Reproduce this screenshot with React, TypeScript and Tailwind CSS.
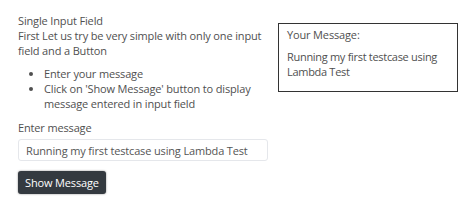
import * as React from "react";

export default function App() {
  const [value, setValue] = React.useState(
    "Running my first testcase using Lambda Test"
  );
  const [shown, setShown] = React.useState(
    "Running my first testcase using Lambda Test"
  );

  return (
    <div
      className="flex h-[206px] w-[474px] items-start bg-white pl-[18px] pt-[13px] text-[11px] leading-[15px] tracking-[-0.15px] text-[#505050]"
      style={{ fontFamily: '"Open Sans", Lato, sans-serif' }}
    >
      <div className="w-[260px] shrink-0 pr-[2px]">
        <p>Single Input Field</p>
        <p>First Let us try be very simple with only one input field and a Button</p>
        <ul className="mt-[8px] list-disc pl-[26px]">
          <li>Enter your message</li>
          <li>Click on &apos;Show Message&apos; button to display message entered in input field</li>
        </ul>
        <label className="mt-[9px] block" htmlFor="msg">
          Enter message
        </label>
        <input
          id="msg"
          value={value}
          onChange={(e) => setValue(e.target.value)}
          className="mt-[4px] block h-[22px] w-[250px] rounded-[3px] border border-[#e5e7eb] px-[7px] text-[11px] text-[#555] outline-none"
        />
        <button
          type="button"
          onClick={() => setShown(value)}
          className="mt-[10px] h-[23px] rounded-[3px] bg-[#343a40] px-[7px] text-[11px] text-white shadow-[0_0_2px_rgba(0,0,0,0.5)]"
        >
          Show Message
        </button>
      </div>
      <div className="mt-[10px] h-[69px] w-[180px] shrink-0 border-[1.5px] border-[#333] px-[8px] pt-[3px]">
        <p>Your Message:</p>
        <p className="mt-[7px] tracking-[-0.3px]">{shown}</p>
      </div>
    </div>
  );
}
